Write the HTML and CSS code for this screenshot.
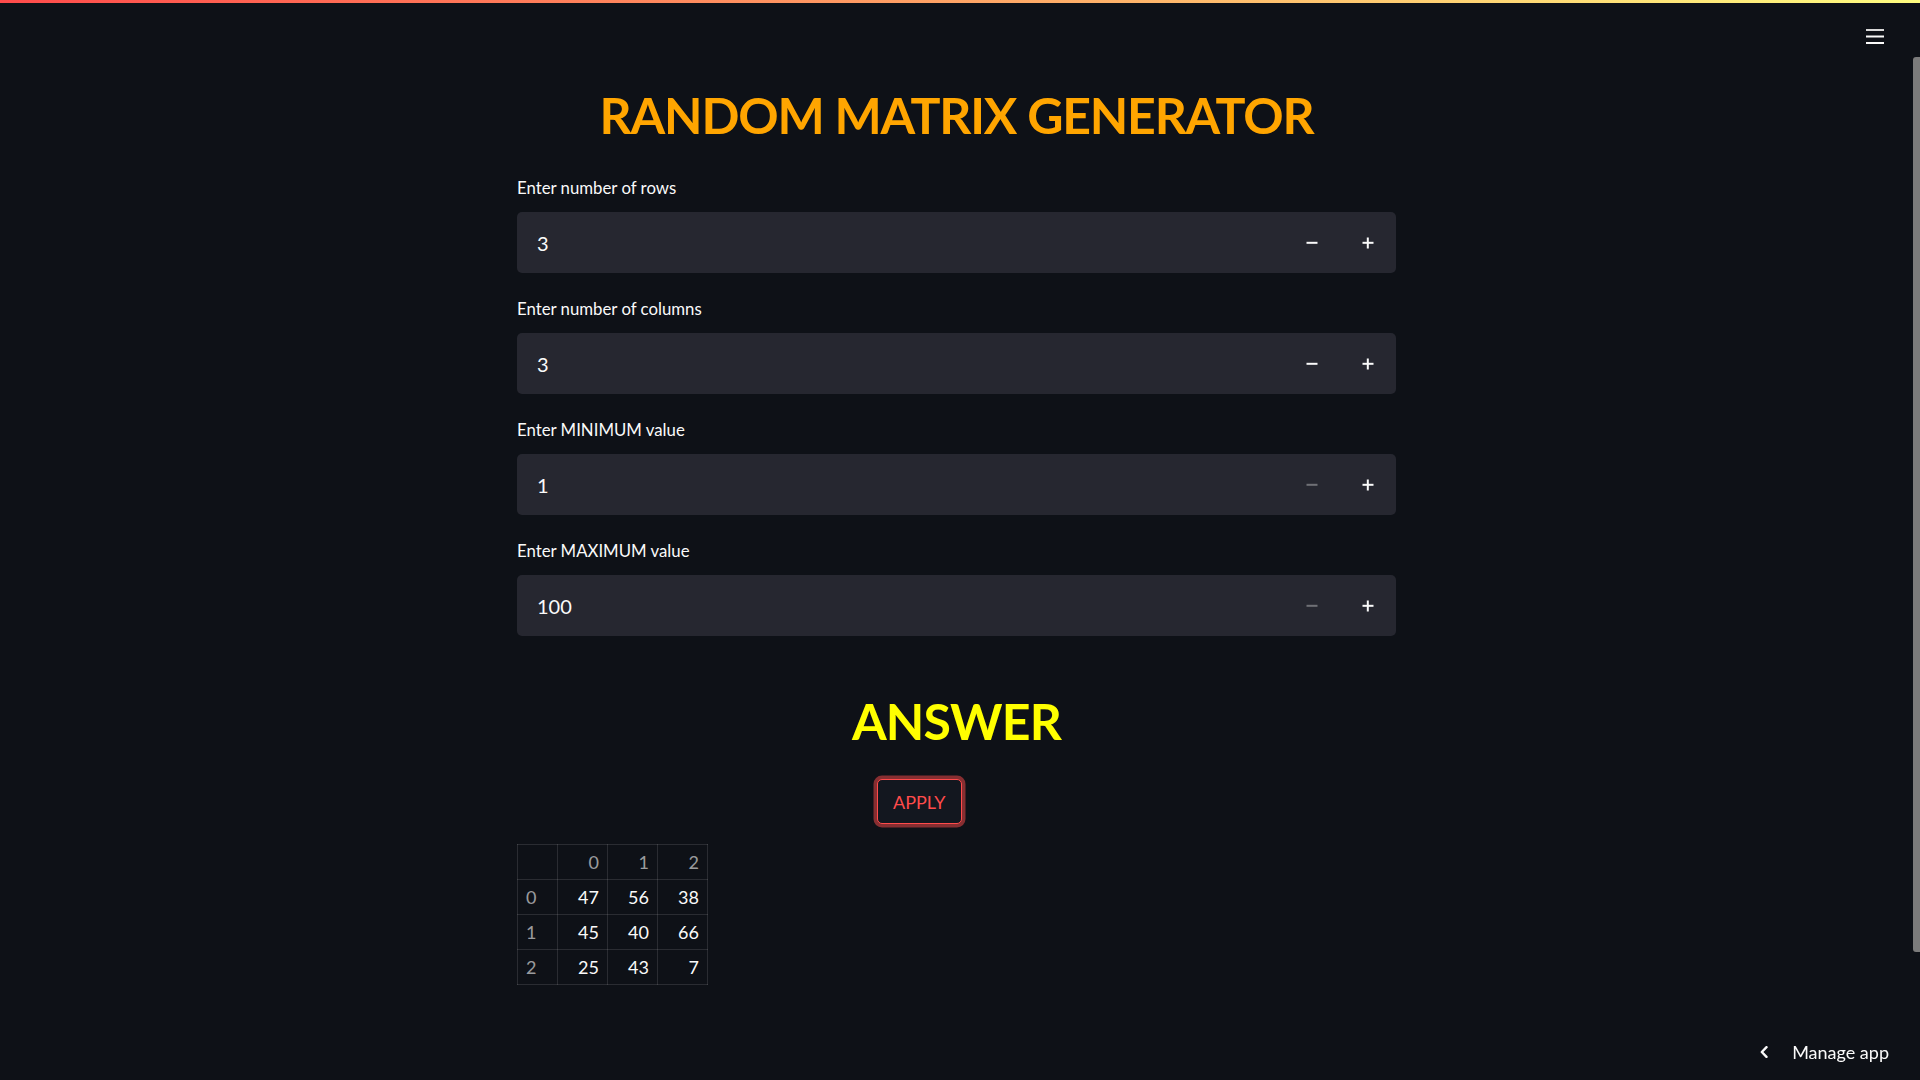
FILE: index.html
```html
<!DOCTYPE html>
<html lang="en">
<head>
<meta charset="utf-8">
<title>Random Matrix Generator</title>
<link rel="stylesheet" href="styles.css">
</head>
<body>
<div class="decoration"></div>
<button class="menu" aria-label="Main menu">
  <svg width="18" height="16" viewBox="0 0 18 16"><rect x="0" y="1" width="18" height="2" fill="#d8d8d8"/><rect x="0" y="7.5" width="18" height="2" fill="#fafafa"/><rect x="0" y="14" width="18" height="2" fill="#fafafa"/></svg>
</button>
<div class="scroll-thumb"></div>

<div class="app">
  <main class="block">
    <h1 class="title">RANDOM MATRIX GENERATOR</h1>

    <div class="field">
      <label class="label">Enter number of rows</label>
      <div class="number">
        <span class="value">3</span>
        <div class="steps">
          <span class="step minus"></span>
          <span class="step plus"></span>
        </div>
      </div>
    </div>

    <div class="field">
      <label class="label">Enter number of columns</label>
      <div class="number">
        <span class="value">3</span>
        <div class="steps">
          <span class="step minus"></span>
          <span class="step plus"></span>
        </div>
      </div>
    </div>

    <div class="field">
      <label class="label">Enter MINIMUM value</label>
      <div class="number">
        <span class="value">1</span>
        <div class="steps">
          <span class="step minus disabled"></span>
          <span class="step plus"></span>
        </div>
      </div>
    </div>

    <div class="field">
      <label class="label">Enter MAXIMUM value</label>
      <div class="number">
        <span class="value">100</span>
        <div class="steps">
          <span class="step minus disabled"></span>
          <span class="step plus"></span>
        </div>
      </div>
    </div>

    <h1 class="answer">ANSWER</h1>

    <div class="button-row">
      <button class="apply">APPLY</button>
    </div>

    <table class="matrix">
      <colgroup>
        <col class="c-index"><col class="c-data"><col class="c-data"><col class="c-data">
      </colgroup>
      <thead>
        <tr><th></th><th>0</th><th>1</th><th>2</th></tr>
      </thead>
      <tbody>
        <tr><th>0</th><td>47</td><td>56</td><td>38</td></tr>
        <tr><th>1</th><td>45</td><td>40</td><td>66</td></tr>
        <tr><th>2</th><td>25</td><td>43</td><td>7</td></tr>
      </tbody>
    </table>
  </main>
</div>

<div class="manage">
  <svg width="10" height="12" viewBox="0 0 10 12"><path d="M7.5 1.2 L2.8 6 L7.5 10.8" fill="none" stroke="#fafafa" stroke-width="2.4" stroke-linecap="round" stroke-linejoin="round"/></svg>
  <span>Manage app</span>
</div>
</body>
</html>
```

FILE: styles.css
```css
html, body {
  margin: 0;
  padding: 0;
  background: #0e1117;
  color: #fafafa;
  font-family: "Lato", "Open Sans", sans-serif;
  height: 100%;
  overflow: hidden;
}

.decoration {
  position: fixed;
  top: 0;
  left: 0;
  right: 0;
  height: 3px;
  background: linear-gradient(90deg, #ff4b4b, #fffd80);
  z-index: 5;
}

.menu {
  position: fixed;
  top: 28px;
  left: 1866px;
  padding: 0;
  border: 0;
  background: transparent;
  line-height: 0;
}

.scroll-thumb {
  position: fixed;
  top: 57px;
  left: 1913px;
  width: 7px;
  height: 895px;
  background: #7b7b7b;
  border-radius: 3px 0 0 3px;
}

.app {
  padding-right: 7px;
}

.block {
  width: 879px;
  margin: 0 auto;
  padding-top: 85px;
  display: flex;
  flex-direction: column;
}

.title, .answer {
  margin: 0;
  font-family: "Lato", sans-serif;
  font-weight: 700;
  font-size: 50px;
  line-height: 60px;
  height: 60px;
  text-align: center;
}

.title {
  color: #ffa500;
  margin-bottom: 30px;
  letter-spacing: -1.2px;
}

.answer {
  color: #ffff00;
  margin-top: 32px;
  margin-bottom: 28px;
  letter-spacing: -0.8px;
}

.field {
  display: flex;
  flex-direction: column;
  margin-bottom: 23px;
}

.field + .answer {
  margin-top: 32px;
}

.label {
  font-size: 16.8px;
  line-height: 25px;
  height: 25px;
  margin-bottom: 12px;
  color: #fafafa;
}

.number {
  height: 61px;
  background: #262730;
  border-radius: 5px;
  display: flex;
  align-items: center;
}

.value {
  flex: 1;
  padding-left: 20px;
  font-size: 20px;
  color: #fafafa;
}

.steps {
  display: flex;
  align-items: center;
  height: 100%;
}

.step {
  width: 56px;
  height: 100%;
  position: relative;
}

.step::before, .step::after {
  content: "";
  position: absolute;
  background: #fafafa;
  left: 50%;
  top: 50%;
  transform: translate(-50%, -50%);
}

.minus::before {
  width: 11px;
  height: 2.4px;
}

.minus::after {
  display: none;
}

.plus::before {
  width: 11px;
  height: 2.4px;
}

.plus::after {
  width: 2.4px;
  height: 11px;
}

.minus.disabled::before {
  background: rgba(250, 250, 250, 0.35);
}

.button-row {
  display: flex;
  padding-left: 360px;
}

.apply {
  height: 45px;
  padding: 0 15px;
  background: #13171f;
  color: #ff4b4b;
  border: 1px solid #ff4b4b;
  border-radius: 5px;
  box-shadow: 0 0 0 3.5px rgba(255, 75, 75, 0.5);
  font-family: "Lato", sans-serif;
  font-size: 18px;
  line-height: 1;
}

.matrix {
  margin-top: 20px;
  border-collapse: collapse;
  table-layout: fixed;
  width: 191px;
  font-family: "Lato", sans-serif;
  font-size: 18px;
  align-self: flex-start;
}

.c-index { width: 40px; }
.c-data { width: 50px; }

.matrix th, .matrix td {
  border: 1px solid rgba(250, 250, 250, 0.12);
  height: 34px;
  padding: 0 8px;
  font-weight: 400;
}

.matrix thead th {
  text-align: right;
  color: rgba(250, 250, 250, 0.6);
}

.matrix tbody th {
  text-align: left;
  color: rgba(250, 250, 250, 0.6);
}

.matrix td {
  text-align: right;
  color: #fafafa;
}

.manage {
  position: fixed;
  right: 31px;
  top: 1039px;
  display: flex;
  align-items: center;
  gap: 23px;
  font-family: "Lato", sans-serif;
  font-size: 18px;
  line-height: 26px;
  color: #fafafa;
}
```
